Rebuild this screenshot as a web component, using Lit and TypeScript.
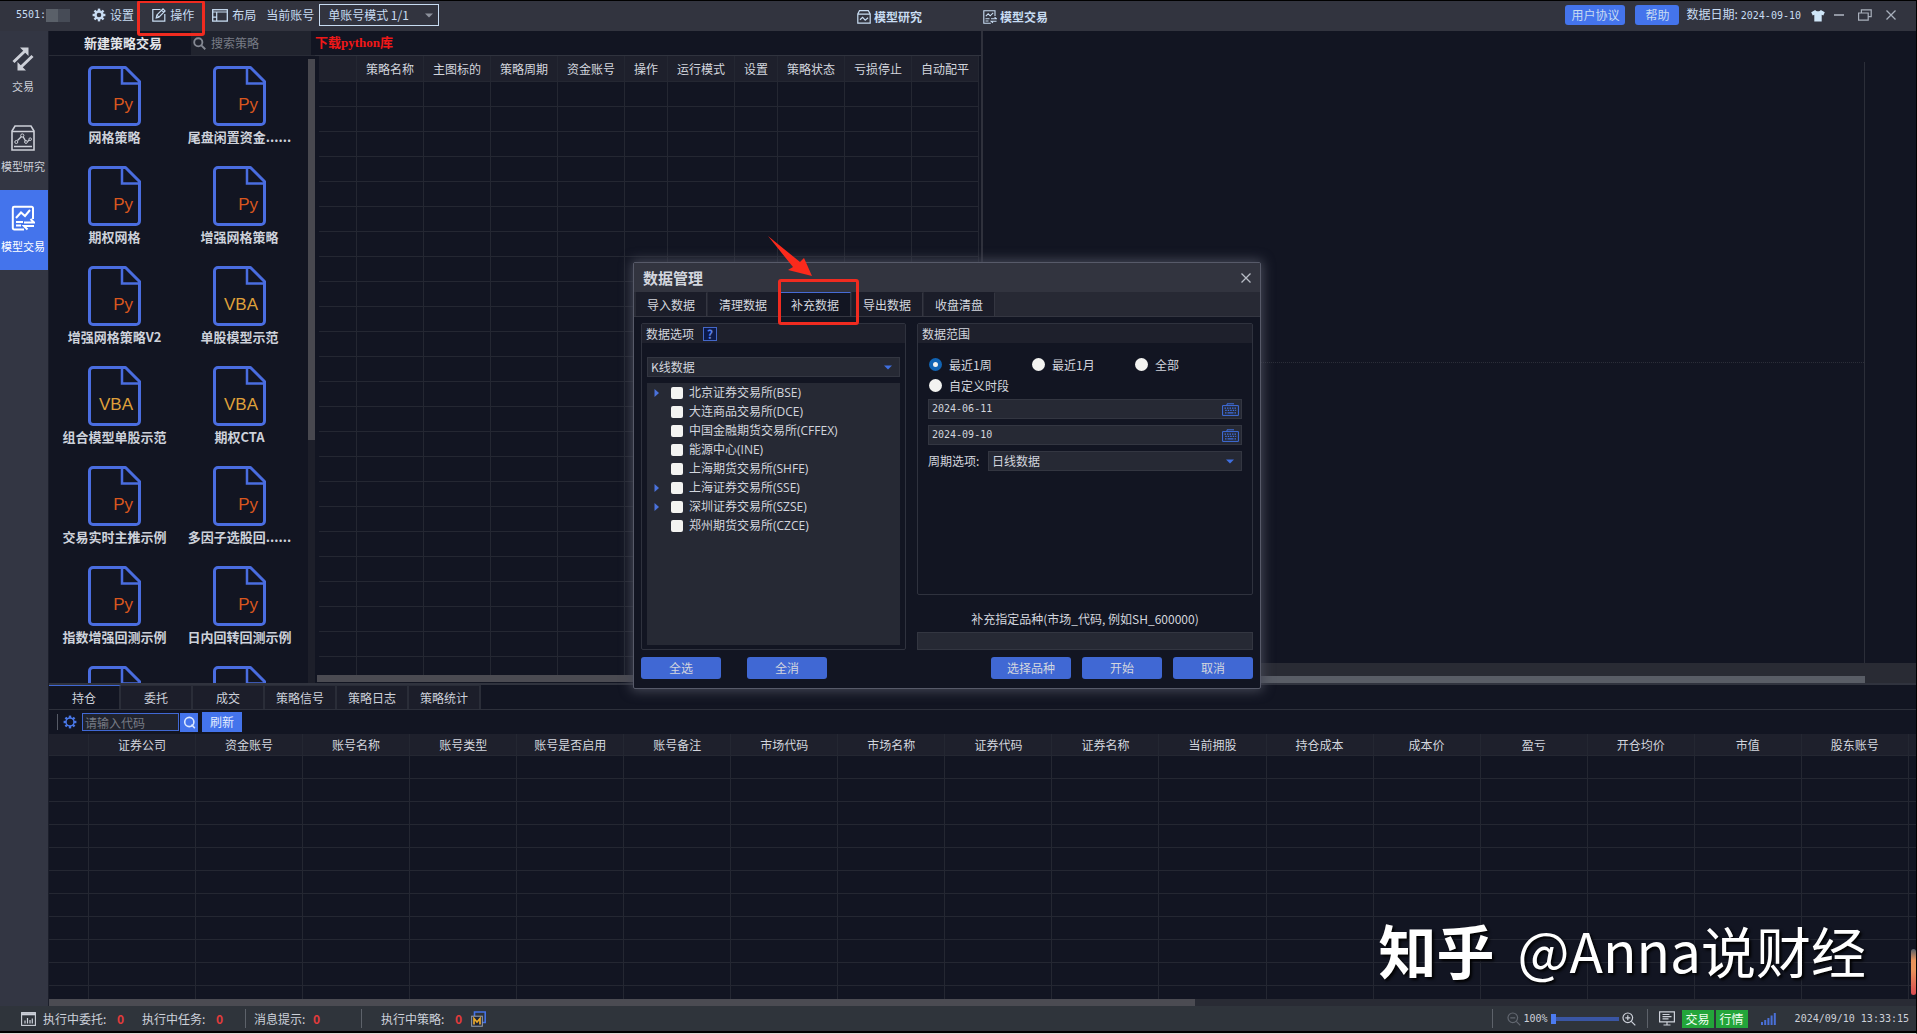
import { LitElement, html, css, svg, nothing, TemplateResult } from "lit";
import { customElement } from "lit/decorators.js";
import { classMap } from "lit/directives/class-map.js";

type Strategy = { name: string; kind: "py" | "vba" | "blank" };

const STRATEGIES: Strategy[] = [
  { name: "网格策略", kind: "py" },
  { name: "尾盘闲置资金......", kind: "py" },
  { name: "期权网格", kind: "py" },
  { name: "增强网格策略", kind: "py" },
  { name: "增强网格策略V2", kind: "py" },
  { name: "单股模型示范", kind: "vba" },
  { name: "组合模型单股示范", kind: "vba" },
  { name: "期权CTA", kind: "vba" },
  { name: "交易实时主推示例", kind: "py" },
  { name: "多因子选股回......", kind: "py" },
  { name: "指数增强回测示例", kind: "py" },
  { name: "日内回转回测示例", kind: "py" },
  { name: "", kind: "blank" },
  { name: "", kind: "blank" },
];

const STRATEGY_COLUMNS = [
  { label: "策略名称" },
  { label: "主图标的" },
  { label: "策略周期" },
  { label: "资金账号" },
  { label: "操作", narrow: true },
  { label: "运行模式" },
  { label: "设置", narrow: true },
  { label: "策略状态" },
  { label: "亏损停止" },
  { label: "自动配平" },
];

const POSITION_COLUMNS = [
  "证券公司", "资金账号", "账号名称", "账号类型", "账号是否启用", "账号备注",
  "市场代码", "市场名称", "证券代码", "证券名称", "当前拥股", "持仓成本",
  "成本价", "盈亏", "开仓均价", "市值", "股东账号",
];

const BOTTOM_TABS = ["持仓", "委托", "成交", "策略信号", "策略日志", "策略统计"];
const DIALOG_TABS = ["导入数据", "清理数据", "补充数据", "导出数据", "收盘清盘"];

const EXCHANGES = [
  { label: "北京证券交易所(BSE)", expandable: true },
  { label: "大连商品交易所(DCE)", expandable: false },
  { label: "中国金融期货交易所(CFFEX)", expandable: false },
  { label: "能源中心(INE)", expandable: false },
  { label: "上海期货交易所(SHFE)", expandable: false },
  { label: "上海证券交易所(SSE)", expandable: true },
  { label: "深圳证券交易所(SZSE)", expandable: true },
  { label: "郑州期货交易所(CZCE)", expandable: false },
];

const base = css`
  :host,
  * {
    box-sizing: border-box;
  }
  svg {
    display: block;
    flex: none;
  }
  button,
  input,
  select {
    font: inherit;
    color: inherit;
    margin: 0;
    padding: 0;
    border: 0;
    border-radius: 0;
    background: none;
    outline: 0;
  }
  input,
  select {
    min-width: 0;
  }
  select {
    appearance: none;
  }
  .mono {
    font-family: "DejaVu Sans Mono", "Liberation Mono", monospace;
    font-size: 10px;
  }
`;

const gearTeeth = [0, 45, 90, 135, 180, 225, 270, 315];

const icon = {
  gear: (hollow = false) => html`<svg width="14" height="14" viewBox="0 0 14 14" aria-hidden="true">
    ${gearTeeth.map((a) => svg`<rect x="5.8" y="0.6" width="2.4" height="2.6" fill="currentColor" transform="rotate(${a} 7 7)" />`)}
    <circle cx="7" cy="7" r=${hollow ? 4 : 3.5} fill="none" stroke="currentColor" stroke-width=${hollow ? 1.4 : 2.4} />
  </svg>`,
  edit: () => html`<svg width="14" height="14" viewBox="0 0 14 14" fill="none" stroke="currentColor" aria-hidden="true">
    <path d="M8.5 1.5H.8v11.7h12V6" stroke-width="1.2" />
    <path d="M4.2 9.9l.6-2.8L11 .9l2.1 2.1-6.2 6.2zM5.2 7.3l1.6 1.6M9.7 2.3l2 2" stroke-width="1.1" />
  </svg>`,
  layout: () => html`<svg width="16" height="13" viewBox="0 0 16 13" fill="none" stroke="currentColor" aria-hidden="true">
    <rect x=".7" y=".7" width="14.6" height="11.4" stroke-width="1.3" />
    <path d="M.7 3h14.6M4.7 3v9M1 8.2h3.5" stroke-width="1.2" />
  </svg>`,
  research: () => html`<svg width="24" height="26" viewBox="0 0 24 26" fill="none" stroke="currentColor" aria-hidden="true">
    <path d="M4 1h16l3 5v19H1V6z" stroke-width="1.6" />
    <path d="M1 6.500h22M3 21.500h18" stroke-width="1.500" />
    <path d="M6.500 15.500L10.500 11.500M12 11.500l2.500 4.500M16.500 16.500l2-1.500" stroke-width="1.400" />
    <circle cx="5.300" cy="17" r="1.500" /><circle cx="11.300" cy="10.500" r="1.600" /><circle cx="15" cy="17" r="1.400" /><circle cx="19.200" cy="14.200" r="1.300" />
  </svg>`,
  researchSmall: () => html`<svg width="14" height="14" viewBox="0 0 14 14" fill="none" stroke="currentColor" aria-hidden="true">
    <path d="M2.5.7h8.8L13.2 4v9.2H.8V4zM.8 4.1h12.4" stroke-width="1.2" />
    <path d="M3 9.8l2.6-2.5 2.6 2.8 2.9-2.4" stroke-width="1.2" />
  </svg>`,
  modelSmall: () => html`<svg width="14" height="14" viewBox="0 0 14 14" fill="none" stroke="currentColor" stroke-width="1.1" aria-hidden="true">
    <path d="M12 6V.8H.8v12.4h7" />
    <path d="M2.8 6.200l2.400-2.400 2 2 3-3M2.500 8.800h4M2.500 11h3M8 8.800h5.400l-1.800-1.600M13.500 11.200H8.200L10 12.800" />
  </svg>`,
  model: () => html`<svg width="24" height="26" viewBox="0 0 24 26" fill="none" stroke="currentColor" stroke-width="2" aria-hidden="true">
    <path d="M22 14V3.200A1.400 1.400 0 0 0 20.600 1.800H3.200A1.400 1.400 0 0 0 1.800 3.200V23a1.400 1.400 0 0 0 1.400 1.400H13" />
    <path d="M5 13l5-5.500 4 3.500 5-6" />
    <path d="M5 17h7M5 20.500h5M13 17.500h10l-3.500-3.500M23 21H13l3.500 3.500" />
  </svg>`,
  trade: () => html`<svg width="22" height="24" viewBox="0 0 22 24" fill="none" stroke="currentColor" stroke-width="3" aria-hidden="true">
    <path d="M1.500 15L13.500 3.500M20.500 9L8.500 20.500" />
    <path d="M8 .5h8.500V9zM14 23.500H5.500V15z" fill="currentColor" stroke="none" />
  </svg>`,
  search: () => html`<svg width="13" height="13" viewBox="0 0 14 14" fill="none" stroke="currentColor" stroke-width="2" aria-hidden="true">
    <circle cx="5.700" cy="5.700" r="4.400" /><path d="M9 9l4.200 4.200" />
  </svg>`,
  find: () => html`<svg width="13" height="13" viewBox="0 0 13 13" fill="none" stroke="currentColor" stroke-width="1.600" aria-hidden="true">
    <circle cx="6.300" cy="6" r="4.600" /><path d="M8.500 8.500l3.300 3.800" />
  </svg>`,
  zoom: (plus: boolean) => html`<svg width="14" height="14" viewBox="0 0 14 14" fill="none" stroke="currentColor" stroke-width="1.200" aria-hidden="true">
    <circle cx="5.800" cy="5.800" r="4.800" /><path d="M9.300 9.300l4 4M3.300 5.800h5" />
    ${plus ? svg`<path d="M5.800 3.300v5" />` : nothing}
  </svg>`,
  shirt: () => html`<svg width="14" height="13" viewBox="0 0 14 13" fill="currentColor" aria-hidden="true">
    <path d="M4.200 1C5 2.800 9 2.800 9.800 1L13.800 3.200 12.300 6.400 10.700 5.800V12.400H3.300V5.800L1.700 6.400.2 3.200z" />
  </svg>`,
  minimize: () => html`<svg width="10" height="10" viewBox="0 0 10 10" stroke="currentColor" stroke-width="1.600" aria-hidden="true"><path d="M0 5h10" /></svg>`,
  restore: () => html`<svg width="14" height="12" viewBox="0 0 14 12" fill="none" stroke="currentColor" stroke-width="1.200" aria-hidden="true">
    <path d="M.6 4h9.600v7.200H.6zM3.400 4V.8h9.800v6.800h-3" />
  </svg>`,
  close: () => html`<svg width="10" height="10" viewBox="0 0 10 10" stroke="currentColor" stroke-width="1.300" aria-hidden="true"><path d="M.5.5l9 9M9.500.5l-9 9" /></svg>`,
  keyboard: () => html`<svg width="17" height="13" viewBox="0 0 17 13" fill="none" stroke="currentColor" aria-hidden="true">
    <path d="M.6 2.600h15.800v9.800H.6zM5 2.400V.8h7" />
    <path d="M2.500 5.200h12M3.200 7.400h11" stroke-width="1.200" stroke-dasharray="1.500 1" />
    <path d="M3 9.900h1.500M5.500 9.900h6M12.500 9.900h1.500" stroke-width="1.200" />
  </svg>`,
  chartWindow: () => html`<svg width="15" height="14" viewBox="0 0 15 14" fill="none" stroke="currentColor" aria-hidden="true">
    <rect x=".6" y=".6" width="13.800" height="12.800" stroke-width="1.100" />
    <path d="M.6 2.200h13.800" stroke-width="2.200" />
    <path d="M4 11.500V8.500M6.500 11.500V6M9 11.500V8M11.300 11.500V6.500" stroke-width="1.200" />
  </svg>`,
  monitor: () => html`<svg width="16" height="15" viewBox="0 0 16 15" fill="none" stroke="currentColor" stroke-width="1.200" aria-hidden="true">
    <path d="M.6.8h14.800v10H.6zM3.500 3.500h7M3.500 5.600h9M3.500 7.800h6M8 11v2.500M4.500 14h7" />
  </svg>`,
  signal: () => html`<svg width="15" height="12" viewBox="0 0 15 12" fill="#4a70d8" aria-hidden="true">
    <path d="M0 9h2v3H0zM3.200 7h2v5h-2zM6.400 5h2v7h-2zM9.600 2.500h2V12h-2zM12.800 0h2v12h-2z" />
  </svg>`,
  badge: () => html`<svg width="15" height="16" viewBox="0 0 15 16" fill="none" aria-hidden="true">
    <path d="M3.500 5V1h10.700v10.500H11" stroke="#4472e6" stroke-width="1.600" />
    <rect x=".7" y="5.200" width="10.600" height="10" fill="#1d2434" stroke="#9aa4b8" stroke-width="1" />
    <path d="M3 13.500V7.500L6 11l3-3.500v6" stroke="#e9a92c" stroke-width="1.700" />
  </svg>`,
};

function fileIcon(kind: Strategy["kind"]): TemplateResult {
  return html`<svg width="53" height="60" viewBox="0 0 53 60" fill="none" aria-hidden="true">
    <path
      d="M37.500 1.500H5A3.500 3.500 0 0 0 1.500 5V55A3.500 3.500 0 0 0 5 58.500H48A3.500 3.500 0 0 0 51.500 55V15.500z"
      stroke="#4a6de0" stroke-width="3" stroke-linejoin="round" />
    <path d="M34 1.500V17.500H51.500" stroke="#4a6de0" stroke-width="2.500" />
    ${kind === "blank"
      ? nothing
      : svg`<text x="45" y="44" text-anchor="end" font-size="17" font-weight="400" font-family="Liberation Sans, sans-serif"
          fill=${kind === "py" ? "#d9571f" : "#dfa03a"}>${kind === "py" ? "Py" : "VBA"}</text>`}
  </svg>`;
}

@customElement("data-dialog")
export class DataDialog extends LitElement {
  static styles = [
    base,
    css`
      :host {
        display: flex;
        flex-direction: column;
        background: #121522;
        border: 1px solid #575a69;
        border-radius: 2px;
        box-shadow: 0 0 12px 2px #454856;
        color: #d3d6de;
      }
      .title {
        display: flex;
        align-items: center;
        justify-content: space-between;
        height: 29px;
        padding: 0 9px;
        background: #32343f;
      }
      h2 {
        margin: 0;
        font-size: 15px;
        line-height: 20px;
        font-weight: 700;
      }
      .close {
        color: #b9bcc6;
      }
      .tabs {
        display: flex;
        gap: 1px;
        padding-left: 2px;
        height: 25px;
        background: #272934;
        border-bottom: 1px solid #343641;
      }
      .tab {
        width: 71px;
        background: #1b1d29;
        border-top: 1px solid #1b1d29;
        border-right: 1px solid #343641;
      }
      .tab.active {
        background: #121522;
        border-top-color: #466bd6;
      }
      .content {
        display: grid;
        grid-template-columns: 265px 336px;
        justify-content: space-between;
        padding: 6px 7px 0;
        height: 333px;
      }
      .side {
        display: flex;
        flex-direction: column;
      }
      fieldset {
        flex: 1;
        display: flex;
        flex-direction: column;
        min-width: 0;
        margin: 0;
        padding: 0;
        border: 1px solid #2f323e;
        border-radius: 2px;
      }
      .caption {
        display: flex;
        align-items: center;
        gap: 9px;
        height: 19px;
        padding: 0 4px;
        background: #1e202c;
      }
      .help {
        width: 14px;
        height: 14px;
        line-height: 12px;
        font-weight: 700;
        color: #5a7fe8;
        background: #0c1a49;
        border: 1px solid #4568c8;
      }
      .options {
        flex: 1;
        display: flex;
        flex-direction: column;
        gap: 6px;
        padding: 14px 5px 4px;
      }
      .field {
        position: relative;
        display: flex;
        flex: none;
        height: 20px;
        background: #262934;
        border: 1px solid #333641;
      }
      .field select,
      .field input {
        width: 100%;
        padding: 0 3px;
        line-height: 18px;
      }
      .drop,
      .keys {
        position: absolute;
        top: 0;
        height: 18px;
        display: flex;
        align-items: center;
        color: #3f6fe0;
        pointer-events: none;
      }
      .drop {
        right: 7px;
      }
      .keys {
        right: 2px;
      }
      .list {
        flex: 1;
        margin: 0;
        padding: 0 0 0 7px;
        list-style: none;
        background: #262934;
      }
      .list li {
        display: flex;
        align-items: center;
        height: 19px;
        font-family: "Open Sans", "Noto Sans CJK SC", sans-serif;
      }
      .arrow {
        width: 17px;
        height: 8px;
      }
      .list label {
        display: flex;
        align-items: center;
        gap: 6px;
      }
      .list input {
        appearance: none;
        width: 12px;
        height: 12px;
        border-radius: 2px;
        background: #f3f3f1;
      }
      .range {
        display: flex;
        flex-direction: column;
        gap: 3px;
        padding: 11px 10px;
      }
      .range .date {
        margin-bottom: 3px;
      }
      .radios {
        display: grid;
        grid-template-columns: repeat(3, 103px);
        line-height: 21px;
      }
      .radios label {
        display: flex;
        align-items: center;
        gap: 7px;
        padding-left: 1px;
      }
      .wide {
        grid-column: 1 / -1;
      }
      .radios input {
        appearance: none;
        width: 13px;
        height: 13px;
        border-radius: 50%;
        background: #f3f3f1;
      }
      .radios input:checked {
        border: 4px solid #1164b4;
      }
      .period {
        display: flex;
        align-items: center;
      }
      .period label {
        width: 60px;
      }
      .period .field {
        flex: 1;
      }
      .hint {
        padding: 14px 0 3px;
        line-height: 20px;
        text-align: center;
      }
      .code {
        flex: none;
        height: 18px;
        background: #262934;
        border: 1px solid #333641;
      }
      .actions {
        display: flex;
        padding: 7px 7px 9px;
      }
      .actions button {
        width: 80px;
        height: 22px;
        border-radius: 3px;
        background: #4068d4;
      }
      .left {
        display: flex;
        gap: 26px;
      }
      .right {
        display: flex;
        gap: 11px;
        margin-left: auto;
      }
    `,
  ];

  private caret() {
    return html`<span class="drop"><svg width="8" height="5" viewBox="0 0 8 5" aria-hidden="true"><path d="M0 .5h8L4 4.500z" fill="currentColor" /></svg></span>`;
  }

  render() {
    return html`
      <header class="title">
        <h2>数据管理</h2>
        <button class="close" aria-label="关闭">${icon.close()}</button>
      </header>
      <nav class="tabs" role="tablist">
        ${DIALOG_TABS.map(
          (t) => html`<button role="tab" aria-selected=${t === "补充数据"} class=${classMap({ tab: true, active: t === "补充数据" })}>${t}</button>`
        )}
      </nav>
      <div class="content">
        <div class="side">
          <fieldset aria-label="数据选项">
            <div class="caption">数据选项 <button class="help" aria-label="说明">?</button></div>
            <div class="options">
              <div class="field">
                <select aria-label="数据选项"><option>K线数据</option></select>
                ${this.caret()}
              </div>
              <ul class="list">
                ${EXCHANGES.map(
                  (e) => html`<li>
                    <span class="arrow">
                      ${e.expandable
                        ? html`<svg width="5" height="8" viewBox="0 0 5 8" aria-hidden="true"><path d="M.5 0v8L5 4z" fill="#4a72dc" /></svg>`
                        : nothing}
                    </span>
                    <label><input type="checkbox" />${e.label}</label>
                  </li>`
                )}
              </ul>
            </div>
          </fieldset>
        </div>
        <div class="side">
          <fieldset aria-label="数据范围">
            <div class="caption">数据范围</div>
            <div class="range">
              <div class="radios">
                <label><input type="radio" name="range" checked />最近1周</label>
                <label><input type="radio" name="range" />最近1月</label>
                <label><input type="radio" name="range" />全部</label>
                <label class="wide"><input type="radio" name="range" />自定义时段</label>
              </div>
              <div class="field date">
                <input class="mono" type="text" aria-label="开始日期" .value=${"2024-06-11"} />
                <span class="keys">${icon.keyboard()}</span>
              </div>
              <div class="field date">
                <input class="mono" type="text" aria-label="结束日期" .value=${"2024-09-10"} />
                <span class="keys">${icon.keyboard()}</span>
              </div>
              <div class="period">
                <label for="period">周期选项:</label>
                <div class="field">
                  <select id="period"><option>日线数据</option></select>
                  ${this.caret()}
                </div>
              </div>
            </div>
          </fieldset>
          <label class="hint" for="code">补充指定品种(市场_代码, 例如SH_600000)</label>
          <input class="code" id="code" type="text" />
        </div>
      </div>
      <footer class="actions">
        <div class="left"><button>全选</button><button>全消</button></div>
        <div class="right"><button>选择品种</button><button>开始</button><button>取消</button></div>
      </footer>
    `;
  }
}

@customElement("app-root")
export class AppRoot extends LitElement {
  static styles = [
    base,
    css`
      :host {
        position: relative;
        display: flex;
        flex-direction: column;
        height: 100vh;
        overflow: hidden;
        border-top: 1px solid #000;
        border-right: 1px solid #000;
        border-bottom: 1px solid #dcd8d4;
        background: #121522;
        color: #cdd1da;
        font-family: "Noto Sans CJK SC", sans-serif;
        font-size: 12px;
        line-height: 16px;
      }

      /* title bar */
      .titlebar {
        flex: none;
        display: grid;
        grid-template-columns: 857px 1fr auto;
        align-items: center;
        height: 30px;
        padding-bottom: 2px;
        background: #32343f;
        color: #c8dcf2;
      }
      .menu,
      .menu button,
      .modes,
      .modes a,
      .system {
        display: flex;
        align-items: center;
      }
      .menu {
        padding-left: 16px;
      }
      .menu button {
        gap: 4px;
        margin-right: 18px;
      }
      .menu .layout {
        margin-right: 10px;
      }
      .user {
        font-family: "DejaVu Sans Mono", monospace;
        font-size: 10px;
      }
      .mask {
        display: flex;
        height: 13px;
        margin-right: 22px;
      }
      .mask i {
        width: 12px;
        background: #5a6069;
      }
      .mask i + i {
        background: #464b56;
      }
      .combo {
        position: relative;
        display: flex;
        width: 120px;
        height: 22px;
        margin-left: 5px;
        border: 1px solid #c8dcf2;
      }
      .combo select {
        width: 100%;
        padding: 0 8px;
      }
      .combo svg {
        position: absolute;
        right: 5px;
        top: 8px;
        pointer-events: none;
      }
      .modes {
        gap: 60px;
        padding-top: 3px;
      }
      .modes a {
        gap: 3px;
        width: 66px;
        color: inherit;
        font-weight: 700;
        text-decoration: none;
        white-space: nowrap;
      }
      .system {
        padding-right: 20px;
      }
      .system .pill {
        height: 20px;
        padding: 0 6px;
        margin-right: 10px;
        border-radius: 3px;
        background: #4474ec;
      }
      .system .help {
        padding: 0 10px;
        margin-right: 7px;
      }
      .system .mono {
        margin-left: 3px;
      }
      .system .shirt {
        margin: 0 9px 0 10px;
        color: #cfe6f8;
      }
      .window {
        display: flex;
        align-items: center;
        gap: 14px;
        color: #a9b0bc;
      }

      /* side navigation */
      .body {
        flex: 1;
        display: flex;
        min-height: 0;
      }
      .sidebar {
        flex: none;
        width: 48px;
        background: #333643;
      }
      .sidebar a {
        display: flex;
        flex-direction: column;
        align-items: center;
        justify-content: center;
        gap: 7px;
        height: 80px;
        padding: 0 2px 1px 0;
        color: #cdd0d8;
        font-size: 11px;
        text-decoration: none;
        white-space: nowrap;
      }
      .sidebar a:first-child {
        height: 79px;
      }
      .sidebar a.active {
        background: #4474ec;
        color: #fff;
      }
      .main {
        flex: 1;
        min-width: 0;
        display: grid;
        grid-template-rows: 654fr 321fr;
        border-left: 1px solid #1c1f2b;
      }
      .upper {
        display: flex;
        min-height: 0;
        border-bottom: 2px solid #30333e;
      }

      /* strategy library */
      .library {
        flex: none;
        display: flex;
        flex-direction: column;
        width: 266px;
      }
      .library-head {
        flex: none;
        display: flex;
        align-items: center;
        height: 25px;
        border-bottom: 1px solid #282b36;
      }
      .library-head h1 {
        width: 142px;
        margin: 0;
        padding-left: 35px;
        font-size: 13px;
        line-height: 24px;
        color: #e3e5ea;
      }
      .library-search {
        display: flex;
        align-items: center;
        gap: 5px;
        width: 120px;
        height: 24px;
        padding-left: 2px;
        background: #20232e;
        color: #858993;
      }
      .library-search input {
        width: 100px;
      }
      ::placeholder {
        color: #777b85;
        opacity: 1;
      }
      .library-body {
        flex: 1;
        min-height: 0;
        display: flex;
      }
      .files {
        flex: 1;
        display: grid;
        grid-template-columns: repeat(2, 125px);
        grid-auto-rows: 100px;
        margin: 0;
        padding: 10px 0 0 3px;
        list-style: none;
        overflow: hidden;
      }
      .files button {
        display: flex;
        flex-direction: column;
        align-items: center;
        gap: 2px;
        width: 100%;
        font-size: 13px;
        line-height: 18px;
        font-weight: 700;
        white-space: nowrap;
      }
      .vbar {
        width: 7px;
        margin-top: 3px;
        background: #1d1f2a;
      }
      .vbar i {
        display: block;
        height: 61%;
        background: #48484f;
      }

      /* strategy table */
      .running {
        flex: none;
        display: flex;
        flex-direction: column;
        width: 668px;
        border-right: 2px solid #2f313c;
      }
      .running-head {
        flex: none;
        height: 25px;
        border-bottom: 1px solid #30333e;
      }
      .running-head a {
        font-family: "Liberation Serif", "Noto Sans CJK SC", serif;
        font-size: 13px;
        line-height: 24px;
        font-weight: 700;
        color: #f01818;
        text-decoration: none;
      }
      .clip {
        flex: 1;
        min-height: 0;
        overflow: hidden;
      }
      .running .clip {
        padding-left: 4px;
      }
      table {
        table-layout: fixed;
        border-collapse: separate;
        border-spacing: 0;
      }
      th,
      td {
        padding: 0;
        border-right: 1px solid #242732;
        border-bottom: 1px solid #242732;
      }
      th {
        background: #1e202c;
        font-weight: 400;
        color: #d3d6de;
      }
      .strategies {
        width: 660px;
      }
      .strategies th {
        height: 26px;
      }
      .strategies td {
        height: 25px;
      }
      .strategies .lead {
        width: 38px;
      }
      .strategies .narrow {
        width: 43px;
      }
      .hbar {
        flex: none;
        height: 8px;
      }
      .hbar i {
        display: block;
        height: 7px;
        background: #4b4b52;
      }
      .running .hbar {
        padding-left: 2px;
      }

      /* chart */
      .chart {
        flex: 1;
        min-width: 0;
        display: flex;
        flex-direction: column;
      }
      .plot {
        flex: 1;
        display: grid;
        grid-template-rows: 1fr 1fr;
        margin: 31px 51px 0 0;
        border-right: 1px solid #2b2e39;
      }
      .plot div:first-child {
        border-bottom: 1px dotted #2b2e39;
      }
      .chart-scroll {
        height: 20px;
        padding: 13px 51px 0 0;
        background: #292b34;
      }
      .chart-scroll i {
        display: block;
        height: 7px;
        background: #595d66;
      }

      /* positions */
      .lower {
        display: flex;
        flex-direction: column;
        min-height: 0;
      }
      .tabs {
        flex: none;
        display: flex;
        height: 25px;
        border-bottom: 1px solid #2d303b;
      }
      .tab {
        width: 72px;
        background: #1c1e2a;
        border-top: 1px solid #2a2d38;
        border-right: 2px solid #2a2d38;
      }
      .tab.active {
        background: #121522;
        border-top-color: #4068d4;
      }
      .toolbar {
        flex: none;
        display: flex;
        align-items: center;
        height: 24px;
        padding-left: 8px;
      }
      .toolbar .grip {
        width: 1px;
        height: 16px;
        margin-right: 5px;
        background: #565a66;
      }
      .toolbar .gear {
        color: #4a78e8;
      }
      .toolbar input {
        width: 97px;
        height: 18px;
        margin: 0 1px 0 5px;
        padding: 0 2px;
        background: #20232e;
        border: 1px solid #4068d4;
      }
      .toolbar .find {
        display: flex;
        align-items: center;
        justify-content: center;
        width: 18px;
        height: 19px;
        background: #4474ec;
        color: #dbe8ff;
      }
      .toolbar .refresh {
        width: 40px;
        height: 20px;
        margin-left: 4px;
        background: #4474ec;
        color: #e3ecff;
      }
      .positions {
        width: 100%;
      }
      .positions th {
        height: 22px;
      }
      .positions td {
        height: 23px;
      }
      .positions .lead {
        width: 40px;
      }
      .positions .tail {
        width: 7px;
        border-right: 0;
      }
      .lower .hbar {
        height: 7px;
        background: #292b34;
      }
      .lower .hbar i {
        width: 61.4%;
      }

      /* status bar */
      .status {
        flex: none;
        display: flex;
        align-items: center;
        height: 27px;
        padding: 0 7px 0 21px;
        background: #2f343b;
        border-bottom: 2px solid #000;
      }
      .count {
        display: flex;
        width: 81px;
        margin-right: 18px;
        justify-content: space-between;
      }
      .count.short {
        width: 66px;
        margin-right: 41px;
      }
      .count.last {
        margin-right: 9px;
      }
      .count b {
        color: #e23b3b;
      }
      .rule {
        width: 1px;
        height: 19px;
        background: #5d626a;
      }
      .status .chart-icon {
        margin-right: 7px;
      }
      .first-rule {
        margin: 0 8px 0 4px;
      }
      .second-rule {
        margin-right: 19px;
      }
      .spacer {
        flex: 1;
      }
      .muted {
        color: #626770;
      }
      .zoom {
        display: flex;
        align-items: center;
        gap: 3px;
        margin: 0 11px 0 14px;
      }
      .zoom input {
        appearance: none;
        width: 68px;
        height: 10px;
        background: linear-gradient(#3a56a4, #3a56a4) center / 100% 4px no-repeat;
      }
      .zoom input::-webkit-slider-thumb {
        appearance: none;
        width: 5px;
        height: 10px;
        background: #4c7bf0;
      }
      .links {
        display: flex;
        align-items: center;
        gap: 2px;
        margin: 0 13px 0 7px;
      }
      .links span {
        width: 32px;
        height: 18px;
        line-height: 18px;
        text-align: center;
        background: #23a53a;
        color: #f0fff0;
      }
      .monitor {
        margin-left: 11px;
      }
      .clock {
        margin-left: 19px;
      }

      /* overlays */
      .dialog {
        position: absolute;
        left: 633px;
        top: 261px;
        width: 628px;
      }
      .mark {
        position: absolute;
        border: 3px solid #f02b20;
        border-radius: 3px;
      }
      .mark-menu {
        left: 137px;
        top: -1px;
        width: 68px;
        height: 36px;
      }
      .mark-tab {
        left: 778px;
        top: 278px;
        width: 81px;
        height: 46px;
      }
      .pointer {
        position: absolute;
        left: 767px;
        top: 234px;
      }
      .watermark {
        position: absolute;
        right: 50px;
        bottom: 44px;
        display: flex;
        align-items: center;
        gap: 23px;
        font-size: 55px;
        line-height: 80px;
        color: #fff;
        text-shadow: 2px 2px 3px #000;
      }
      .watermark b {
        font-size: 58px;
      }
      .edge {
        position: absolute;
        right: 0;
        bottom: 38px;
        width: 5px;
        height: 46px;
        border-radius: 3px;
        background: linear-gradient(#55606a, #e8935c 25%, #e8935c 45%, #d84a50);
      }
    `,
  ];

  private emptyRows(rows: number, columns: number, narrowEnd = false) {
    return Array.from(
      { length: rows },
      () => html`<tr>
        ${Array.from({ length: columns }, (_, i) => html`<td class=${narrowEnd && i === columns - 1 ? "tail" : ""}></td>`)}
      </tr>`
    );
  }

  render() {
    return html`
      <header class="titlebar">
        <div class="menu">
          <span class="user">5501:</span>
          <span class="mask"><i></i><i></i></span>
          <button>${icon.gear()} 设置</button>
          <button>${icon.edit()} 操作</button>
          <button class="layout">${icon.layout()} 布局</button>
          <label for="account">当前账号</label>
          <span class="combo">
            <select id="account"><option>单账号模式 1/1</option></select>
            <svg width="8" height="5" viewBox="0 0 8 5" aria-hidden="true"><path d="M0 .5h8L4 4.500z" fill="#8d929c" /></svg>
          </span>
        </div>
        <nav class="modes">
          <a href="#research">${icon.researchSmall()} 模型研究</a>
          <a href="#model">${icon.modelSmall()} 模型交易</a>
        </nav>
        <div class="system">
          <button class="pill">用户协议</button>
          <button class="pill help">帮助</button>
          <span>数据日期:<span class="mono">2024-09-10</span></span>
          <button class="shirt" aria-label="换肤">${icon.shirt()}</button>
          <div class="window">
            <button aria-label="最小化">${icon.minimize()}</button>
            <button aria-label="还原">${icon.restore()}</button>
            <button aria-label="关闭">${icon.close()}</button>
          </div>
        </div>
      </header>

      <div class="body">
        <nav class="sidebar">
          <a href="#trade">${icon.trade()}交易</a>
          <a href="#research">${icon.research()}模型研究</a>
          <a href="#model" class="active">${icon.model()}模型交易</a>
        </nav>

        <main class="main">
          <div class="upper">
            <section class="library">
              <div class="library-head">
                <h1>新建策略交易</h1>
                <label class="library-search">
                  ${icon.search()}
                  <input type="text" placeholder="搜索策略" aria-label="搜索策略" />
                </label>
              </div>
              <div class="library-body">
                <ul class="files">
                  ${STRATEGIES.map((s) => html`<li><button>${fileIcon(s.kind)}<span>${s.name}</span></button></li>`)}
                </ul>
                <div class="vbar"><i></i></div>
              </div>
            </section>

            <section class="running">
              <div class="running-head"><a href="#python">下载python库</a></div>
              <div class="clip">
                <table class="strategies">
                  <thead>
                    <tr>
                      <th class="lead"></th>
                      ${STRATEGY_COLUMNS.map((c) => html`<th class=${c.narrow ? "narrow" : ""}>${c.label}</th>`)}
                    </tr>
                  </thead>
                  <tbody>${this.emptyRows(24, STRATEGY_COLUMNS.length + 1)}</tbody>
                </table>
              </div>
              <div class="hbar"><i></i></div>
            </section>

            <section class="chart">
              <div class="plot"><div></div><div></div></div>
              <div class="chart-scroll"><i></i></div>
            </section>
          </div>

          <section class="lower">
            <nav class="tabs" role="tablist">
              ${BOTTOM_TABS.map(
                (t, i) => html`<button role="tab" aria-selected=${i === 0} class=${classMap({ tab: true, active: i === 0 })}>${t}</button>`
              )}
            </nav>
            <div class="toolbar">
              <span class="grip"></span>
              <button class="gear" aria-label="设置">${icon.gear(true)}</button>
              <input type="text" placeholder="请输入代码" aria-label="代码" />
              <button class="find" aria-label="查找">${icon.find()}</button>
              <button class="refresh">刷新</button>
            </div>
            <div class="clip">
              <table class="positions">
                <thead>
                  <tr>
                    <th class="lead"></th>
                    ${POSITION_COLUMNS.map((c) => html`<th>${c}</th>`)}
                    <th class="tail"></th>
                  </tr>
                </thead>
                <tbody>${this.emptyRows(12, POSITION_COLUMNS.length + 2, true)}</tbody>
              </table>
            </div>
            <div class="hbar"><i></i></div>
          </section>
        </main>
      </div>

      <footer class="status">
        <span class="chart-icon">${icon.chartWindow()}</span>
        <span class="count">执行中委托: <b>0</b></span>
        <span class="count">执行中任务: <b>0</b></span>
        <span class="rule first-rule"></span>
        <span class="count short">消息提示: <b>0</b></span>
        <span class="rule second-rule"></span>
        <span class="count last">执行中策略: <b>0</b></span>
        ${icon.badge()}
        <span class="spacer"></span>
        <span class="rule"></span>
        <div class="zoom">
          <button class="muted" aria-label="缩小">${icon.zoom(false)}</button>
          <span class="mono">100%</span>
          <input type="range" min="100" max="200" .value=${"100"} aria-label="缩放" />
          <button aria-label="放大">${icon.zoom(true)}</button>
        </div>
        <span class="rule"></span>
        <span class="monitor">${icon.monitor()}</span>
        <div class="links"><span>交易</span><span>行情</span></div>
        ${icon.signal()}
        <time class="clock mono">2024/09/10 13:33:15</time>
      </footer>

      <data-dialog class="dialog" role="dialog" aria-label="数据管理"></data-dialog>

      <div class="mark mark-menu"></div>
      <div class="mark mark-tab"></div>
      <svg class="pointer" width="48" height="44" viewBox="0 0 48 44" aria-hidden="true">
        <path d="M1 1L33 27 37 23 45 41 21 35 26 32z" fill="#fb2a1c" />
      </svg>
      <div class="watermark"><b>知乎</b><span>@Anna说财经</span></div>
      <div class="edge"></div>
    `;
  }
}
